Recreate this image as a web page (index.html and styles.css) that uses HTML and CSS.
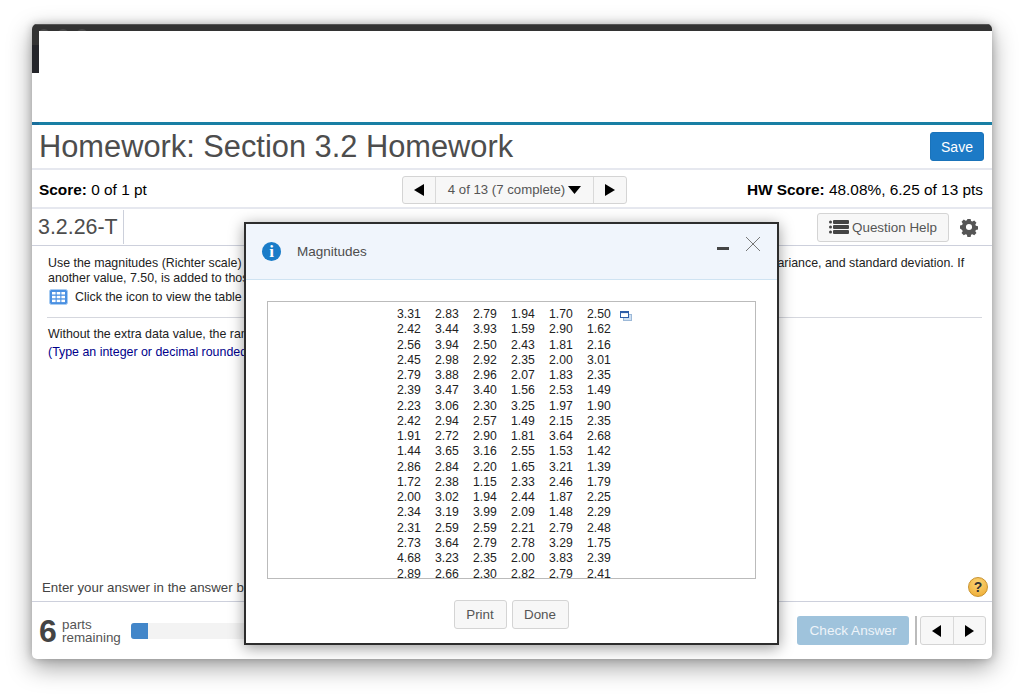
FILE: index.html
```html
<!DOCTYPE html>
<html lang="en">
<head>
<meta charset="utf-8">
<title>Homework: Section 3.2 Homework</title>
<link rel="stylesheet" href="styles.css">
</head>
<body>
<div class="window">
  <div class="titlebar"><i class="light"></i><i class="light"></i><i class="light"></i></div>
  <div class="sidebar-strip"></div>
  <div class="blank"></div>
  <header class="title-row">
    <h1>Homework: Section 3.2 Homework</h1>
    <button class="save">Save</button>
  </header>
  <div class="score-row">
    <div class="score"><b>Score:</b> 0 of 1 pt</div>
    <div class="pager">
      <span class="pager-btn prev"><svg width="10" height="12" viewBox="0 0 10 12"><path d="M10 0V12L0 6Z"/></svg></span>
      <span class="pager-mid">4 of 13 (7 complete) <svg width="13" height="8" viewBox="0 0 13 8"><path d="M0 0H13L6.5 8Z"/></svg></span>
      <span class="pager-btn next"><svg width="10" height="12" viewBox="0 0 10 12"><path d="M0 0V12L10 6Z"/></svg></span>
    </div>
    <div class="hw"><b>HW Score:</b> 48.08%, 6.25 of 13 pts</div>
  </div>
  <div class="question-row">
    <div class="qid">3.2.26-T</div>
    <div class="tools">
      <button class="help">
        <svg width="20" height="14" viewBox="0 0 20 14"><g fill="#444"><rect x="0" y="0.5" width="3" height="3" rx="1.5"/><rect x="0" y="5.5" width="3" height="3" rx="1.5"/><rect x="0" y="10.5" width="3" height="3" rx="1.5"/><rect x="4" y="0" width="16" height="4" rx="1"/><rect x="4" y="5" width="16" height="4" rx="1"/><rect x="4" y="10" width="16" height="4" rx="1"/></g></svg>
        Question Help
      </button>
      <svg class="gear" width="20" height="20" viewBox="0 0 20 20"><path fill="#555" fill-rule="evenodd" d="M8.2 1h3.6l.5 2.4 1.5.6 2-1.3 2.5 2.5-1.3 2 .6 1.5 2.4.5v3.6l-2.4.5-.6 1.5 1.3 2-2.5 2.5-2-1.3-1.5.6-.5 2.4H8.2l-.5-2.4-1.5-.6-2 1.3-2.5-2.5 1.3-2-.6-1.5L0 11.8V8.2l2.4-.5.6-1.5-1.3-2 2.5-2.5 2 1.3 1.5-.6ZM10 6.6a3.4 3.4 0 1 0 0 6.8 3.4 3.4 0 0 0 0-6.8Z" transform="translate(1 1) scale(.9)"/></svg>
    </div>
  </div>
  <main class="content">
    <div class="question">
      <p class="line">Use the magnitudes (Richter scale) of the 120 earthquakes listed in the accompanying data table. Use technology to find the range, variance, and standard deviation. If</p>
      <p class="line">another value, 7.50, is added to those listed in the data set, do the measures of variation change much?</p>
      <p class="line table-link">
        <svg width="19" height="16" viewBox="0 0 19 16"><rect x="0.5" y="0.5" width="18" height="15" rx="2" fill="#4a90e2" stroke="#a9cdf2"/><g fill="#fff"><rect x="3" y="3" width="3.6" height="2.5"/><rect x="7.7" y="3" width="3.6" height="2.5"/><rect x="12.4" y="3" width="3.6" height="2.5"/><rect x="3" y="6.8" width="3.6" height="2.5"/><rect x="7.7" y="6.8" width="3.6" height="2.5"/><rect x="12.4" y="6.8" width="3.6" height="2.5"/><rect x="3" y="10.6" width="3.6" height="2.5"/><rect x="7.7" y="10.6" width="3.6" height="2.5"/><rect x="12.4" y="10.6" width="3.6" height="2.5"/></g></svg>
        <span>Click the icon to view the table of magnitudes.</span>
      </p>
      <hr class="rule">
      <p class="line">Without the extra data value, the range is</p>
      <p class="line hint-blue">(Type an integer or decimal rounded to two decimal places as needed.)</p>
    </div>
    <div class="answer-hint">
      <span>Enter your answer in the answer box and then click Check Answer.</span>
      <span class="q-badge">?</span>
    </div>
  </main>
  <footer class="footer">
    <div class="parts">
      <span class="parts-num">6</span>
      <span class="parts-text">parts<br>remaining</span>
      <span class="progress"><span class="progress-fill"></span></span>
    </div>
    <div class="actions">
      <button class="check">Check Answer</button>
      <span class="divider"></span>
      <div class="mini-pager">
        <span class="mini-btn"><svg width="9" height="12" viewBox="0 0 9 12"><path d="M9 0V12L0 6Z"/></svg></span>
        <span class="mini-btn"><svg width="9" height="12" viewBox="0 0 9 12"><path d="M0 0V12L9 6Z"/></svg></span>
      </div>
    </div>
  </footer>

  <section class="dialog">
    <div class="dialog-head">
      <span class="info">i</span>
      <span class="dialog-title">Magnitudes</span>
      <span class="minimize"></span>
      <svg class="close" width="16" height="16" viewBox="0 0 16 16"><path d="M1 1L15 15M15 1L1 15" stroke="#777" stroke-width="1" fill="none"/></svg>
    </div>
    <div class="dialog-body">
      <div class="data-box">
        <div class="data-grid">
          <span>3.31</span><span>2.83</span><span>2.79</span><span>1.94</span><span>1.70</span><span>2.50</span>
          <span>2.42</span><span>3.44</span><span>3.93</span><span>1.59</span><span>2.90</span><span>1.62</span>
          <span>2.56</span><span>3.94</span><span>2.50</span><span>2.43</span><span>1.81</span><span>2.16</span>
          <span>2.45</span><span>2.98</span><span>2.92</span><span>2.35</span><span>2.00</span><span>3.01</span>
          <span>2.79</span><span>3.88</span><span>2.96</span><span>2.07</span><span>1.83</span><span>2.35</span>
          <span>2.39</span><span>3.47</span><span>3.40</span><span>1.56</span><span>2.53</span><span>1.49</span>
          <span>2.23</span><span>3.06</span><span>2.30</span><span>3.25</span><span>1.97</span><span>1.90</span>
          <span>2.42</span><span>2.94</span><span>2.57</span><span>1.49</span><span>2.15</span><span>2.35</span>
          <span>1.91</span><span>2.72</span><span>2.90</span><span>1.81</span><span>3.64</span><span>2.68</span>
          <span>1.44</span><span>3.65</span><span>3.16</span><span>2.55</span><span>1.53</span><span>1.42</span>
          <span>2.86</span><span>2.84</span><span>2.20</span><span>1.65</span><span>3.21</span><span>1.39</span>
          <span>1.72</span><span>2.38</span><span>1.15</span><span>2.33</span><span>2.46</span><span>1.79</span>
          <span>2.00</span><span>3.02</span><span>1.94</span><span>2.44</span><span>1.87</span><span>2.25</span>
          <span>2.34</span><span>3.19</span><span>3.99</span><span>2.09</span><span>1.48</span><span>2.29</span>
          <span>2.31</span><span>2.59</span><span>2.59</span><span>2.21</span><span>2.79</span><span>2.48</span>
          <span>2.73</span><span>3.64</span><span>2.79</span><span>2.78</span><span>3.29</span><span>1.75</span>
          <span>4.68</span><span>3.23</span><span>2.35</span><span>2.00</span><span>3.83</span><span>2.39</span>
          <span>2.89</span><span>2.66</span><span>2.30</span><span>2.82</span><span>2.79</span><span>2.41</span>
        </div>
        <svg class="copy" width="12" height="10" viewBox="0 0 12 10"><rect x="3.5" y="3.5" width="8" height="6" fill="#cfe0f2" stroke="#9db9d8"/><rect x="0.5" y="0.5" width="8" height="6" fill="#fff" stroke="#2f5fa8"/><rect x="0.5" y="0.5" width="8" height="1.6" fill="#2f5fa8"/></svg>
      </div>
      <div class="dialog-actions">
        <button class="plain print">Print</button>
        <button class="plain done">Done</button>
      </div>
    </div>
  </section>
</div>
</body>
</html>
```
FILE: styles.css
```css
* { box-sizing: border-box; }
html, body { margin: 0; height: 100%; background: #fff; }
body {
  padding: 24px 32px 40px;
  font-family: "Liberation Sans", Arial, sans-serif;
  color: #000;
  overflow: hidden;
}
p { margin: 0; }
button { font-family: inherit; cursor: pointer; }

.window {
  position: relative;
  width: 960px;
  height: 635px;
  display: flex;
  flex-direction: column;
  background: #fff;
  border-radius: 5px;
  box-shadow: 0 8px 24px rgba(0,0,0,.38), 0 0 8px rgba(0,0,0,.22);
  overflow: hidden;
}
.titlebar {
  flex: none;
  height: 7px;
  background: #333;
  border-top: 1px solid #555;
  display: flex;
  gap: 7px;
  padding: 4px 0 0 6px;
  overflow: hidden;
}
.light { width: 12px; height: 12px; border-radius: 50%; background: #4a4a4a; flex: none; }
.sidebar-strip {
  position: absolute;
  left: 0;
  top: 7px;
  width: 7px;
  height: 42px;
  background: #24252a;
  border-top: 14px solid #333;
}
.blank { flex: none; height: 91px; }

.title-row {
  position: relative;
  flex: none;
  height: 48px;
  border-top: 3px solid #187fa4;
  border-bottom: 2px solid #e6e8ef;
  display: flex;
  align-items: center;
  justify-content: space-between;
  padding: 0 8px 0 7px;
}
.title-row::before {
  content: "";
  position: absolute;
  left: 0;
  top: -3px;
  width: 7px;
  height: 3px;
  background: #1a6f9c;
}
h1 {
  margin: 0;
  font-weight: 400;
  font-size: 30.8px;
  color: #4d4d4d;
  line-height: 44px;
  white-space: nowrap;
}
.save {
  width: 54px;
  height: 29px;
  padding: 0;
  background: #1c7ac6;
  color: #fff;
  border: 1px solid #1a73ba;
  border-radius: 3px;
  font-size: 14px;
}

.score-row {
  flex: none;
  height: 39px;
  display: grid;
  grid-template-columns: 1fr auto 1fr;
  align-items: center;
  padding: 2px 9px 0 7px;
  border-bottom: 2px solid #e6e8ef;
  font-size: 15.4px;
}
.hw { text-align: right; }
.pager {
  display: flex;
  height: 28px;
  margin-left: 7px;
  border: 1px solid #d4d4d4;
  border-radius: 3px;
  background: #f7f7f7;
  font-size: 13.2px;
  color: #555;
}
.pager-btn { width: 32px; display: flex; align-items: center; justify-content: center; }
.pager-mid {
  width: 159px;
  display: flex;
  align-items: center;
  justify-content: center;
  gap: 3px;
  border-left: 1px solid #d9d9d9;
  border-right: 1px solid #d9d9d9;
}

.question-row {
  flex: none;
  height: 37px;
  display: flex;
  justify-content: space-between;
  align-items: center;
  border-bottom: 1px solid #cdd0dc;
  font-size: 21.4px;
  color: #4d4d4d;
}
.qid {
  height: 34px;
  line-height: 34px;
  padding: 0 5px 0 6px;
  border-right: 1px solid #ccd0db;
}
.tools { display: flex; align-items: center; gap: 10px; padding-right: 13px; }
.help {
  width: 132px;
  height: 29px;
  padding: 0;
  display: flex;
  align-items: center;
  justify-content: center;
  gap: 3px;
  background: #f7f7f7;
  border: 1px solid #d4d4d4;
  border-radius: 3px;
  color: #555;
  font-size: 13.4px;
}
.gear { display: block; }

.content {
  flex: 1;
  min-height: 0;
  display: flex;
  flex-direction: column;
  justify-content: space-between;
  font-size: 12.4px;
}
.question { padding: 10px 10px 0 16px; }
.line { line-height: 15px; white-space: nowrap; color: #222; }
.table-link {
  display: flex;
  align-items: center;
  gap: 7px;
  margin-top: 3px;
  height: 16px;
  margin-left: 1px;
}
.rule { margin: 12px 0 9px -1px; border: 0; border-top: 1px solid #d5d7de; }
.hint-blue { color: #00008b; margin-top: 3px; }
.answer-hint {
  display: flex;
  align-items: center;
  justify-content: space-between;
  padding: 0 4px 0 10px;
  height: 27px;
  font-size: 13.3px;
  color: #444;
}
.q-badge {
  width: 20px;
  height: 20px;
  flex: none;
  border-radius: 50%;
  background: radial-gradient(circle at 50% 30%, #fbd476, #eda92f);
  border: 1px solid #c8922e;
  color: #333;
  font-weight: 700;
  font-size: 14px;
  line-height: 18px;
  text-align: center;
  transform: translateY(-1px);
}

.footer {
  flex: none;
  height: 58px;
  border-top: 1px solid #cdd0dc;
  display: flex;
  justify-content: space-between;
  align-items: center;
  padding: 0 6px 0 7px;
}
.parts { display: flex; align-items: center; }
.parts-num { font-size: 32px; font-weight: 700; color: #444; line-height: 34px; width: 23px; }
.parts-text { font-size: 13.4px; line-height: 13px; color: #555; width: 69px; }
.progress {
  display: block;
  width: 140px;
  height: 16px;
  border-radius: 3px;
  background: #f3f3f3;
  overflow: hidden;
}
.progress-fill { display: block; width: 17px; height: 16px; background: #4286c9; }
.actions { display: flex; align-items: center; }
.check {
  width: 112px;
  height: 29px;
  padding: 0;
  background: #9fc3dc;
  color: #eef4f9;
  border: 0;
  border-radius: 3px;
  font-size: 13.6px;
}
.divider { width: 2px; height: 29px; margin: 0 3px 0 6px; background: #bbb; }
.mini-pager {
  display: flex;
  width: 66px;
  height: 29px;
  border: 1px solid #d4d4d4;
  border-radius: 3px;
  background: #f7f7f7;
}
.mini-btn { flex: 1; display: flex; align-items: center; justify-content: center; }
.mini-btn + .mini-btn { border-left: 1px solid #d9d9d9; }

.dialog {
  position: absolute;
  left: 212px;
  top: 198px;
  width: 535px;
  height: 423px;
  background: #fff;
  border: 2px solid #2d2d2d;
  box-shadow: 0 3px 14px rgba(0,0,0,.4);
  display: flex;
  flex-direction: column;
}
.dialog-head {
  position: relative;
  flex: none;
  height: 56px;
  background: #f0f5fc;
  border-bottom: 1px solid #cfe3f2;
  display: flex;
  align-items: center;
  padding-left: 16px;
}
.info {
  width: 19px;
  height: 19px;
  border-radius: 50%;
  background: #1a7cc8;
  color: #fff;
  font-family: "Liberation Serif", serif;
  font-weight: 700;
  font-size: 17px;
  line-height: 19px;
  text-align: center;
}
.dialog-title { margin-left: 16px; font-size: 13.5px; color: #4d4d4d; }
.minimize { position: absolute; left: 471px; top: 23px; width: 12px; height: 3px; background: #444; }
.close { position: absolute; left: 499px; top: 12px; }
.dialog-body { flex: 1; min-height: 0; padding: 21px 21px 0; }
.data-box {
  position: relative;
  height: 278px;
  width: 489px;
  border: 1px solid #bbb;
  overflow: hidden;
}
.data-grid {
  display: grid;
  grid-template-columns: repeat(6, 38px);
  grid-auto-rows: 15.27px;
  margin: 5px 0 0 129px;
  font-size: 12.2px;
  line-height: 15.27px;
  color: #222;
}
.copy { position: absolute; left: 352px; top: 9px; }
.dialog-actions { display: flex; justify-content: center; gap: 5px; margin-top: 21px; margin-left: -1px; }
.plain {
  height: 29px;
  padding: 0;
  background: #f7f7f7;
  border: 1px solid #d4d4d4;
  border-radius: 3px;
  color: #555;
  font-size: 13.4px;
}
.print { width: 53px; }
.done { width: 57px; }
```
